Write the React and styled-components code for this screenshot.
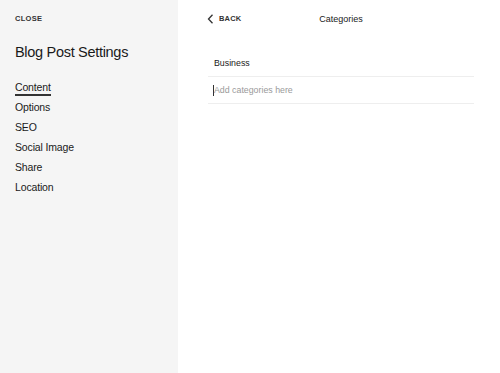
import React from 'react';
import styled, { createGlobalStyle } from 'styled-components';

const GlobalStyle = createGlobalStyle`
  html, body {
    margin: 0;
    padding: 0;
    background: #fff;
  }
  body {
    font-family: "Liberation Sans", Arial, sans-serif;
    color: #1a1a1a;
    -webkit-font-smoothing: antialiased;
  }
`;

const Page = styled.div`
  display: flex;
  width: 500px;
  height: 373px;
  overflow: hidden;
`;

const Sidebar = styled.div`
  width: 178px;
  flex-shrink: 0;
  background-color: #f5f5f5;
  padding: 14px 15px 0;
  box-sizing: border-box;
  display: flex;
  flex-direction: column;
`;

const CloseLink = styled.div`
  font-size: 7.5px;
  font-weight: 700;
  letter-spacing: 0.3px;
  text-transform: uppercase;
  color: #333;
  line-height: 9px;
`;

const Title = styled.h1`
  margin: 20px 0 0;
  font-size: 14.5px;
  font-weight: 400;
  letter-spacing: -0.3px;
  line-height: 18px;
  color: #1a1a1a;
`;

const Nav = styled.nav`
  display: flex;
  flex-direction: column;
  align-items: flex-start;
  margin-top: 19px;
  gap: 6px;
`;

const NavItem = styled.a`
  font-size: 10.5px;
  line-height: 14px;
  letter-spacing: -0.15px;
  color: #1a1a1a;
  text-decoration: none;
  border-bottom: 2px solid ${p => (p.$active ? '#333' : 'transparent')};
  margin-bottom: -2px;
  cursor: pointer;
`;

const Main = styled.div`
  flex: 1;
  display: flex;
  flex-direction: column;
  padding: 0 26px 0 30px;
`;

const TopBar = styled.div`
  position: relative;
  display: flex;
  align-items: center;
  height: 37px;
`;

const BackButton = styled.div`
  display: flex;
  align-items: center;
  gap: 5px;
  margin-left: -1px;
  font-size: 7.5px;
  font-weight: 700;
  letter-spacing: 0.2px;
  color: #333;
  text-transform: uppercase;
`;

const PanelTitle = styled.div`
  position: absolute;
  left: 0;
  right: 0;
  text-align: center;
  font-size: 9px;
  color: #1a1a1a;
  pointer-events: none;
`;

const List = styled.div`
  display: flex;
  flex-direction: column;
  margin-top: 13px;
`;

const Row = styled.div`
  display: flex;
  align-items: center;
  height: 26px;
  padding-left: 6px;
  border-bottom: 1px solid #eeeeee;
  font-size: 8.8px;
  color: ${p => (p.$placeholder ? '#9a9a9a' : '#1a1a1a')};
`;

const Caret = styled.span`
  display: inline-block;
  width: 1px;
  height: 11px;
  background: #333;
  margin-left: -1px;
`;

const Chevron = () => (
  <svg width="7" height="10" viewBox="0 0 7 10">
    <path d="M5.5 0.8 L1.5 5 L5.5 9.2" fill="none" stroke="#333" strokeWidth="1.3" />
  </svg>
);

const navItems = ['Content', 'Options', 'SEO', 'Social Image', 'Share', 'Location'];

const App = () => (
  <>
    <GlobalStyle />
    <Page>
      <Sidebar>
        <CloseLink>Close</CloseLink>
        <Title>Blog Post Settings</Title>
        <Nav>
          {navItems.map((item, i) => (
            <NavItem key={item} $active={i === 0}>
              {item}
            </NavItem>
          ))}
        </Nav>
      </Sidebar>
      <Main>
        <TopBar>
          <BackButton>
            <Chevron />
            Back
          </BackButton>
          <PanelTitle>Categories</PanelTitle>
        </TopBar>
        <List>
          <Row>Business</Row>
          <Row $placeholder>
            <Caret />
            Add categories here
          </Row>
        </List>
      </Main>
    </Page>
  </>
);

export default App;
